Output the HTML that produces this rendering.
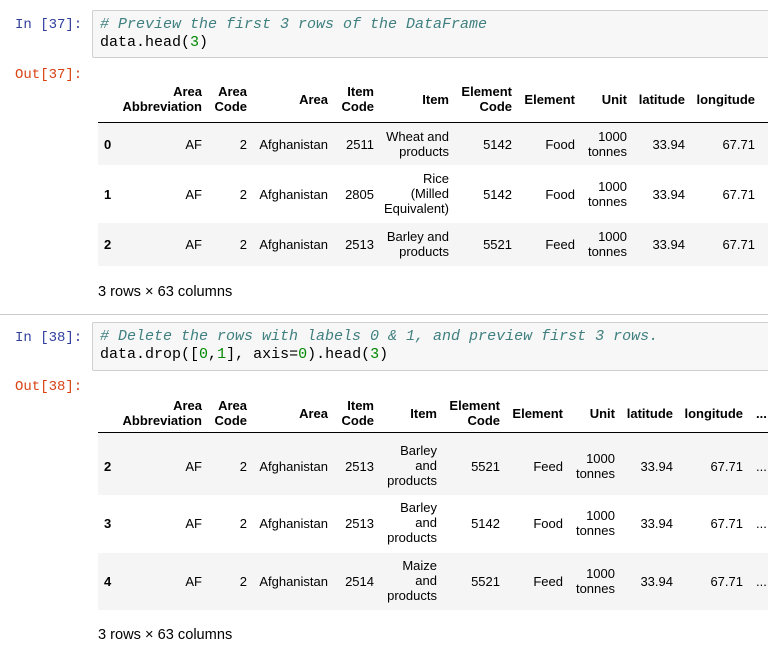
<!DOCTYPE html>
<html><head><meta charset="utf-8"><style>
body{margin:0;width:768px;height:657px;background:#fff;position:relative;overflow:hidden;font-family:"Liberation Sans",Arial,sans-serif;font-size:13px;color:#000}
.a{position:absolute;white-space:nowrap;line-height:15px;text-align:right}
.h{font-weight:bold}
.p{position:absolute;font-family:"Liberation Mono",monospace;font-size:14px;line-height:16px}
.in{color:#303f9f}.out{color:#d84315}
.box{position:absolute;left:92px;width:700px;background:#f7f7f7;border:1px solid #cfcfcf;border-radius:2px;font-family:"Liberation Mono",monospace;font-size:15px;line-height:18px;padding:5px 7px;box-sizing:border-box}
.cm{color:#408080;font-style:italic}.n{color:#080}
.band{position:absolute;left:98px;right:0;background:#f5f5f5}
.line{position:absolute;left:98px;right:0;height:1px;background:#000}
.cap{font-size:14.6px}
</style></head><body>
<div class="p in" style="left:15px;top:17px">In [37]:</div>
<div class="box" style="top:10px;height:48px"><span class="cm"># Preview the first 3 rows of the DataFrame</span><br>data.head(<span class="n">3</span>)</div>
<div class="p out" style="left:15px;top:67px">Out[37]:</div>
<div class="line" style="top:122px"></div>
<div class="band" style="top:123px;height:42px"></div>
<div class="band" style="top:223px;height:43px"></div>

<div class="a h" style="right:566px;top:84px">Area<br>Abbreviation</div>
<div class="a h" style="right:521px;top:84px">Area<br>Code</div>
<div class="a h" style="right:440px;top:92px">Area</div>
<div class="a h" style="right:394px;top:84px">Item<br>Code</div>
<div class="a h" style="right:319px;top:92px">Item</div>
<div class="a h" style="right:256px;top:84px">Element<br>Code</div>
<div class="a h" style="right:193px;top:92px">Element</div>
<div class="a h" style="right:141px;top:92px">Unit</div>
<div class="a h" style="right:83px;top:92px">latitude</div>
<div class="a h" style="right:13px;top:92px">longitude</div>

<div class="a h" style="left:104px;top:137px;text-align:left">0</div>
<div class="a" style="right:566px;top:137px">AF</div><div class="a" style="right:521px;top:137px">2</div><div class="a" style="right:440px;top:137px">Afghanistan</div><div class="a" style="right:394px;top:137px">2511</div><div class="a" style="right:319px;top:129px">Wheat and<br>products</div><div class="a" style="right:256px;top:137px">5142</div><div class="a" style="right:193px;top:137px">Food</div><div class="a" style="right:141px;top:129px">1000<br>tonnes</div><div class="a" style="right:83px;top:137px">33.94</div><div class="a" style="right:13px;top:137px">67.71</div>

<div class="a h" style="left:104px;top:187px;text-align:left">1</div>
<div class="a" style="right:566px;top:187px">AF</div><div class="a" style="right:521px;top:187px">2</div><div class="a" style="right:440px;top:187px">Afghanistan</div><div class="a" style="right:394px;top:187px">2805</div><div class="a" style="right:319px;top:171px">Rice<br>(Milled<br>Equivalent)</div><div class="a" style="right:256px;top:187px">5142</div><div class="a" style="right:193px;top:187px">Food</div><div class="a" style="right:141px;top:179px">1000<br>tonnes</div><div class="a" style="right:83px;top:187px">33.94</div><div class="a" style="right:13px;top:187px">67.71</div>

<div class="a h" style="left:104px;top:237px;text-align:left">2</div>
<div class="a" style="right:566px;top:237px">AF</div><div class="a" style="right:521px;top:237px">2</div><div class="a" style="right:440px;top:237px">Afghanistan</div><div class="a" style="right:394px;top:237px">2513</div><div class="a" style="right:319px;top:229px">Barley and<br>products</div><div class="a" style="right:256px;top:237px">5521</div><div class="a" style="right:193px;top:237px">Feed</div><div class="a" style="right:141px;top:229px">1000<br>tonnes</div><div class="a" style="right:83px;top:237px">33.94</div><div class="a" style="right:13px;top:237px">67.71</div>

<div class="a cap" style="left:98px;top:285px;text-align:left">3 rows × 63 columns</div>
<div style="position:absolute;left:0;right:0;top:314px;height:1px;background:#ccc"></div>

<div class="p in" style="left:15px;top:330px">In [38]:</div>
<div class="box" style="top:322px;height:49px"><span class="cm"># Delete the rows with labels 0 &amp; 1, and preview first 3 rows.</span><br>data.drop([<span class="n">0</span>,<span class="n">1</span>], axis=<span class="n">0</span>).head(<span class="n">3</span>)</div>
<div class="p out" style="left:15px;top:379px">Out[38]:</div>
<div class="line" style="top:432px"></div>
<div class="band" style="top:433px;height:62px"></div>
<div class="band" style="top:553px;height:57px"></div>

<div class="a h" style="right:566px;top:398px">Area<br>Abbreviation</div>
<div class="a h" style="right:521px;top:398px">Area<br>Code</div>
<div class="a h" style="right:440px;top:406px">Area</div>
<div class="a h" style="right:394px;top:398px">Item<br>Code</div>
<div class="a h" style="right:331px;top:406px">Item</div>
<div class="a h" style="right:268px;top:398px">Element<br>Code</div>
<div class="a h" style="right:205px;top:406px">Element</div>
<div class="a h" style="right:153px;top:406px">Unit</div>
<div class="a h" style="right:95px;top:406px">latitude</div>
<div class="a h" style="right:25px;top:406px">longitude</div>
<div class="a h" style="left:756px;top:406px;text-align:left">...</div>

<div class="a h" style="left:104px;top:459px;text-align:left">2</div>
<div class="a" style="right:566px;top:459px">AF</div><div class="a" style="right:521px;top:459px">2</div><div class="a" style="right:440px;top:459px">Afghanistan</div><div class="a" style="right:394px;top:459px">2513</div><div class="a" style="right:331px;top:443px">Barley<br>and<br>products</div><div class="a" style="right:268px;top:459px">5521</div><div class="a" style="right:205px;top:459px">Feed</div><div class="a" style="right:153px;top:451px">1000<br>tonnes</div><div class="a" style="right:95px;top:459px">33.94</div><div class="a" style="right:25px;top:459px">67.71</div><div class="a" style="left:756px;top:459px;text-align:left">...</div>

<div class="a h" style="left:104px;top:516px;text-align:left">3</div>
<div class="a" style="right:566px;top:516px">AF</div><div class="a" style="right:521px;top:516px">2</div><div class="a" style="right:440px;top:516px">Afghanistan</div><div class="a" style="right:394px;top:516px">2513</div><div class="a" style="right:331px;top:500px">Barley<br>and<br>products</div><div class="a" style="right:268px;top:516px">5142</div><div class="a" style="right:205px;top:516px">Food</div><div class="a" style="right:153px;top:508px">1000<br>tonnes</div><div class="a" style="right:95px;top:516px">33.94</div><div class="a" style="right:25px;top:516px">67.71</div><div class="a" style="left:756px;top:516px;text-align:left">...</div>

<div class="a h" style="left:104px;top:574px;text-align:left">4</div>
<div class="a" style="right:566px;top:574px">AF</div><div class="a" style="right:521px;top:574px">2</div><div class="a" style="right:440px;top:574px">Afghanistan</div><div class="a" style="right:394px;top:574px">2514</div><div class="a" style="right:331px;top:558px">Maize<br>and<br>products</div><div class="a" style="right:268px;top:574px">5521</div><div class="a" style="right:205px;top:574px">Feed</div><div class="a" style="right:153px;top:566px">1000<br>tonnes</div><div class="a" style="right:95px;top:574px">33.94</div><div class="a" style="right:25px;top:574px">67.71</div><div class="a" style="left:756px;top:574px;text-align:left">...</div>

<div class="a cap" style="left:98px;top:628px;text-align:left">3 rows × 63 columns</div>
</body></html>
